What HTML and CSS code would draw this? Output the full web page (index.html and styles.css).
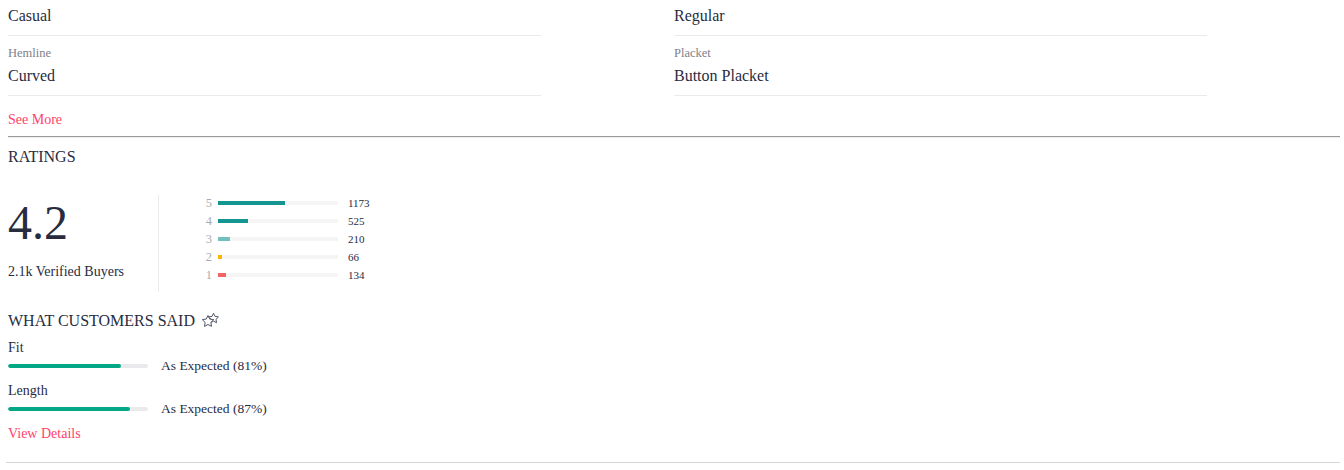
FILE: index.html
```html
<!DOCTYPE html>
<html lang="en">
<head>
<meta charset="utf-8">
<title>Product details and ratings</title>
<link rel="stylesheet" href="styles.css">
</head>
<body>
<div class="page">
  <div class="specs">
    <div class="spec"><div class="spec-key">Occasion</div><div class="spec-val">Casual</div></div>
    <div class="spec"><div class="spec-key">Length</div><div class="spec-val">Regular</div></div>
    <div class="spec"><div class="spec-key">Hemline</div><div class="spec-val">Curved</div></div>
    <div class="spec"><div class="spec-key">Placket</div><div class="spec-val">Button Placket</div></div>
  </div>
  <div class="see-more">See More</div>
  <hr class="rule">

  <div class="section-title">RATINGS</div>
  <div class="ratings">
    <div class="summary">
      <div class="avg">4.2</div>
      <div class="buyers">2.1k Verified Buyers</div>
    </div>
    <div class="histogram">
      <div class="hrow"><span class="star-num">5</span><span class="track"><span class="fill c5" style="width:56%"></span></span><span class="count">1173</span></div>
      <div class="hrow"><span class="star-num">4</span><span class="track"><span class="fill c4" style="width:25%"></span></span><span class="count">525</span></div>
      <div class="hrow"><span class="star-num">3</span><span class="track"><span class="fill c3" style="width:10%"></span></span><span class="count">210</span></div>
      <div class="hrow"><span class="star-num">2</span><span class="track"><span class="fill c2" style="width:3.5%"></span></span><span class="count">66</span></div>
      <div class="hrow"><span class="star-num">1</span><span class="track"><span class="fill c1" style="width:6.5%"></span></span><span class="count">134</span></div>
    </div>
  </div>

  <div class="section-title said">WHAT CUSTOMERS SAID
    <svg class="stars" width="19" height="16" viewBox="0 0 19 16" aria-hidden="true">
      <path d="M12.5 1.3 L14.03 4.4 L17.45 4.89 L14.97 7.3 L15.56 10.71 L12.5 9.1 L9.44 10.71 L10.03 7.3 L7.55 4.89 L10.97 4.4Z" fill="#fff" stroke="#535665" stroke-width="1" stroke-linejoin="round"/>
      <path d="M7 3.5 L8.76 7.07 L12.71 7.65 L9.85 10.43 L10.53 14.35 L7 12.5 L3.47 14.35 L4.15 10.43 L1.29 7.65 L5.24 7.07Z" fill="#fff" stroke="#535665" stroke-width="1" stroke-linejoin="round"/>
    </svg>
  </div>
  <div class="said-list">
    <div class="said-item">
      <div class="said-key">Fit</div>
      <div class="said-row"><span class="said-track"><span class="said-fill" style="width:81%"></span></span><span class="said-val">As Expected (81%)</span></div>
    </div>
    <div class="said-item">
      <div class="said-key">Length</div>
      <div class="said-row"><span class="said-track"><span class="said-fill" style="width:87%"></span></span><span class="said-val">As Expected (87%)</span></div>
    </div>
  </div>
  <div class="view-details">View Details</div>
  <div class="bottom-rule"></div>
</div>
</body>
</html>
```

FILE: styles.css
```css
* { box-sizing: border-box; }
html, body { margin: 0; padding: 0; background: #fff; }
body {
  font-family: "Liberation Serif", "Times New Roman", serif;
  color: #282c3f;
  overflow: hidden;
}
.page {
  width: 1340px;
  padding-left: 8px;
  margin-top: -24px;
}
.specs {
  display: grid;
  grid-template-columns: 533px 533px;
  column-gap: 133px;
}
.spec {
  padding: 10px 0 9px;
  border-bottom: 1px solid #eaeaec;
}
.spec-key {
  font-size: 12.5px;
  line-height: 14px;
  color: #7e818c;
}
.spec-val {
  margin-top: 6px;
  font-size: 16px;
  line-height: 20px;
  color: #282c3f;
}
.see-more {
  padding-top: 16px;
  font-size: 14px;
  line-height: 16px;
  color: #ff3f6c;
}
.rule {
  margin: 8px 0 0;
  height: 0;
  border: 0;
  border-top: 1px solid #9a9a9a;
  border-bottom: 1px solid #eeeeee;
}
.section-title {
  padding-top: 9px;
  font-size: 16px;
  line-height: 20px;
  color: #282c3f;
}
.ratings {
  display: flex;
  margin-top: 28px;
}
.summary {
  width: 151px;
  height: 97px;
  padding-top: 4px;
  border-right: 1px solid #eaeaec;
}
.avg {
  font-size: 48px;
  line-height: 48px;
  color: #282c3f;
}
.buyers {
  margin-top: 17px;
  font-size: 14px;
  line-height: 16px;
}
.histogram {
  margin-left: 39px;
  margin-top: -1px;
}
.hrow {
  display: flex;
  align-items: center;
  height: 18px;
}
.star-num {
  width: 14px;
  text-align: right;
  margin-right: 6px;
  font-size: 12.5px;
  line-height: 18px;
  color: #a9abb3;
}
.track {
  display: block;
  width: 120px;
  height: 4px;
  margin-bottom: 0;
  background: #f5f5f6;
}
.fill { display: block; height: 4px; }
.c5, .c4 { background: #14958f; }
.c3 { background: #72bfbc; }
.c2 { background: #fcb301; }
.c1 { background: #f16565; }
.count {
  margin-left: 10px;
  font-size: 11px;
  line-height: 18px;
  color: #282c3f;
}
.said {
  padding-top: 19px;
  display: flex;
  align-items: center;
}
.stars { margin-left: 6px; margin-top: -3px; }
.said-list { margin-top: 8px; }
.said-item + .said-item { margin-top: 7px; }
.said-key {
  font-size: 14px;
  line-height: 18px;
}
.said-row {
  display: flex;
  align-items: center;
  height: 18px;
}
.said-track {
  display: block;
  width: 140px;
  height: 4px;
  border-radius: 2px;
  background: #eaeaec;
  overflow: hidden;
}
.said-fill {
  display: block;
  height: 4px;
  border-radius: 2px;
  background: #03a685;
}
.said-val {
  margin-left: 13px;
  font-size: 13.5px;
  line-height: 18px;
}
.view-details {
  margin-top: 7px;
  font-size: 14px;
  line-height: 18px;
  color: #ff3f6c;
}
.bottom-rule {
  margin-top: 19px;
  margin-left: -2px;
  width: 1334px;
  height: 1px;
  background: #d4d5d9;
}
```
